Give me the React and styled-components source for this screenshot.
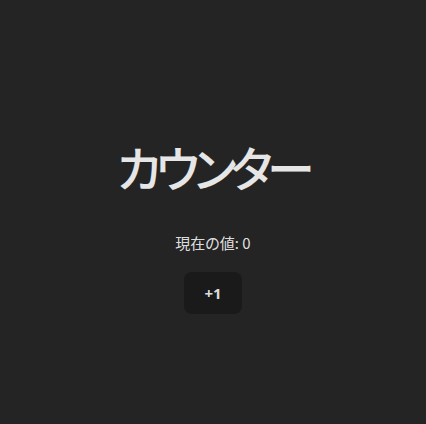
import React, { useState } from 'react';
import styled, { createGlobalStyle } from 'styled-components';

const GlobalStyle = createGlobalStyle`
  html, body {
    margin: 0;
    padding: 0;
    background: #242424;
  }
  body {
    font-family: "Noto Sans CJK JP", "Noto Sans", sans-serif;
    color: rgba(255, 255, 255, 0.87);
  }
`;

const Page = styled.main`
  box-sizing: border-box;
  min-height: 100vh;
  padding-top: 30px;
  display: flex;
  flex-direction: column;
  align-items: center;
  justify-content: center;
  text-align: center;
`;

const Title = styled.h1`
  margin: 0;
  font-size: 48px;
  font-weight: 500;
  line-height: 1.1;
  letter-spacing: -5.5px;
  font-feature-settings: "palt";
  color: #e6e6e6;
`;

const Value = styled.p`
  margin: 38px 0 0;
  font-size: 15px;
  line-height: 24px;
  font-feature-settings: "palt";
  color: rgba(255, 255, 255, 0.87);
`;

const CountButton = styled.button`
  margin-top: 17px;
  height: 42px;
  padding: 0 19px;
  border: 1px solid transparent;
  border-radius: 8px;
  background: #1a1a1a;
  color: rgba(255, 255, 255, 0.87);
  font-family: "Noto Sans", sans-serif;
  font-size: 15px;
  font-weight: 700;
  cursor: pointer;
`;

export default function App() {
  const [count, setCount] = useState(0);

  return (
    <>
      <GlobalStyle />
      <Page>
        <Title>カウンター</Title>
        <Value>現在の値: {count}</Value>
        <CountButton onClick={() => setCount(count + 1)}>+1</CountButton>
      </Page>
    </>
  );
}
